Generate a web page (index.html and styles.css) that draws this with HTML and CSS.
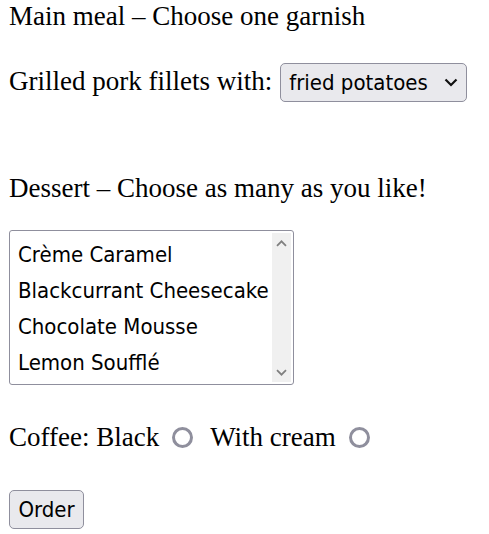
FILE: index.html
```html
<!DOCTYPE html>
<html lang="en">
<head>
<meta charset="utf-8">
<title>Order form</title>
<link rel="stylesheet" href="styles.css">
</head>
<body>
<form class="order">
  <p class="line first">Main meal – Choose one garnish</p>
  <p class="line meal">
    <label for="garnish">Grilled pork fillets with:</label>
    <span class="select-wrap">
      <select id="garnish" class="select">
        <option>fried potatoes</option>
        <option>boiled potatoes</option>
        <option>rice</option>
      </select>
      <svg class="chev" width="14" height="9" viewBox="0 0 14 9"><path d="M1.5 1.5 L7 7 L12.5 1.5" fill="none" stroke="#111" stroke-width="2.2"/></svg>
    </span>
  </p>
  <p class="line dessert">Dessert – Choose as many as you like!</p>
  <div class="listbox" role="listbox" aria-multiselectable="true">
    <div class="items">
      <div class="item" role="option">Crème Caramel</div>
      <div class="item" role="option">Blackcurrant Cheesecake</div>
      <div class="item" role="option">Chocolate Mousse</div>
      <div class="item" role="option">Lemon Soufflé</div>
    </div>
    <div class="scrollbar">
      <svg class="arrow" width="11" height="7" viewBox="0 0 11 7"><path d="M1 5.8 L5.5 1.3 L10 5.8" fill="none" stroke="#808080" stroke-width="1.8"/></svg>
      <svg class="arrow" width="11" height="7" viewBox="0 0 11 7"><path d="M1 1.2 L5.5 5.7 L10 1.2" fill="none" stroke="#808080" stroke-width="1.8"/></svg>
    </div>
  </div>
  <p class="line coffee">
    <label class="opt">Coffee: Black <input type="radio" name="coffee" class="radio"></label>
    <label class="opt">With cream <input type="radio" name="coffee" class="radio"></label>
  </p>
  <p class="line submit"><button type="button" class="btn">Order</button></p>
</form>
</body>
</html>
```
FILE: styles.css
```css
html, body {
  margin: 0;
  padding: 0;
  background: #ffffff;
}
body {
  font-family: "Liberation Serif", "Times New Roman", serif;
  font-size: 27px;
  color: #000;
  padding-left: 9px;
}
.order {
  margin: 0;
}
.line {
  margin: 0;
  line-height: 31px;
}
.first {
  padding-top: 1px;
}
.meal {
  margin-top: 31px;
  display: flex;
  align-items: baseline;
  gap: 8px;
}
.select-wrap {
  position: relative;
  display: inline-block;
}
.select {
  appearance: none;
  -webkit-appearance: none;
  font-family: "DejaVu Sans Condensed", "DejaVu Sans", sans-serif;
  font-size: 22px;
  color: #000;
  background: #e9e9ed;
  border: 1.5px solid #8f8f9d;
  border-radius: 5px;
  width: 187px;
  height: 39px;
  padding: 0 30px 0 8px;
  margin: 0;
}
.chev {
  position: absolute;
  right: 9px;
  top: 15px;
  pointer-events: none;
}
.dessert {
  margin-top: 71px;
}
.listbox {
  margin-top: 26px;
  width: 285px;
  height: 155px;
  box-sizing: border-box;
  border: 1.5px solid #8f8f9d;
  border-radius: 3px;
  display: flex;
  justify-content: space-between;
  padding: 2px 2px 2px 0;
}
.items {
  font-family: "DejaVu Sans Condensed", "DejaVu Sans", sans-serif;
  font-size: 22px;
  padding-top: 4px;
}
.item {
  line-height: 36px;
  padding-left: 8px;
  white-space: nowrap;
}
.scrollbar {
  width: 19px;
  background: #f0f0f0;
  display: flex;
  flex-direction: column;
  justify-content: space-between;
  align-items: center;
  padding: 7px 0 6px;
}
.coffee {
  margin-top: 37px;
  display: flex;
  align-items: center;
  gap: 17px;
}
.opt {
  display: flex;
  align-items: center;
  gap: 13px;
}
.radio {
  appearance: none;
  -webkit-appearance: none;
  flex: none;
  width: 21px;
  height: 21px;
  box-sizing: border-box;
  border: 3px solid #8f8f9d;
  border-radius: 50%;
  margin: 0;
  background: #fff;
}
.submit {
  margin-top: 37px;
}
.btn {
  font-family: "DejaVu Sans Condensed", "DejaVu Sans", sans-serif;
  font-size: 22px;
  color: #000;
  background: #e9e9ed;
  border: 1.5px solid #8f8f9d;
  border-radius: 5px;
  height: 39px;
  width: 75px;
  padding: 0;
  margin: 0;
}
```
